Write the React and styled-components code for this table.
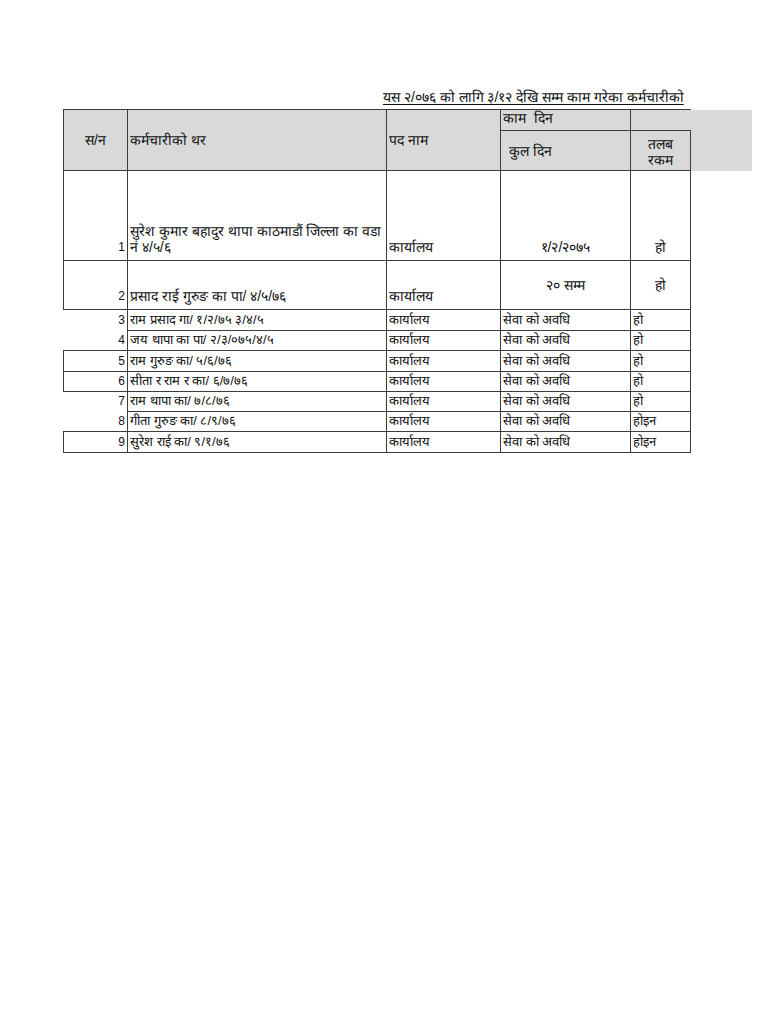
import styled, { createGlobalStyle } from 'styled-components'

const GlobalStyle = createGlobalStyle`
    html, body {
        margin: 0;
        padding: 0;
        background: #ffffff;
    }
    body {
        font-family: "Liberation Sans", "DejaVu Sans", sans-serif;
        color: #111111;
    }
`

const rows = [
    { no: 1, name: 'सुरेश कुमार बहादुर थापा काठमाडौं जिल्ला का वडा नं ४/५/६', post: 'कार्यालय', period: '१/२/२०७५', note: 'हो', size: 'tall', h: 89 },
    { no: 2, name: 'प्रसाद राई गुरुङ का पा/ ४/५/७६', post: 'कार्यालय', period: '२० सम्म', note: 'हो', size: 'mid', h: 48 },
    { no: 3, name: 'राम प्रसाद  गा/ १/२/७५ ३/४/५', post: 'कार्यालय', period: 'सेवा को अवधि', note: 'हो', open: 'top', h: 20 },
    { no: 4, name: 'जय थापा का पा/ २/३/०७५/४/५', post: 'कार्यालय', period: 'सेवा को अवधि', note: 'हो', open: 'bottom', h: 19 },
    { no: 5, name: 'राम गुरुङ का/ ५/६/७६', post: 'कार्यालय', period: 'सेवा को अवधि', note: 'हो', h: 20 },
    { no: 6, name: 'सीता र राम र का/ ६/७/७६', post: 'कार्यालय', period: 'सेवा को अवधि', note: 'हो', h: 19 },
    { no: 7, name: 'राम थापा का/ ७/८/७६', post: 'कार्यालय', period: 'सेवा को अवधि', note: 'हो', open: 'top', h: 19 },
    { no: 8, name: 'गीता गुरुङ का/ ८/९/७६', post: 'कार्यालय', period: 'सेवा को अवधि', note: 'होइन', open: 'bottom', h: 19 },
    { no: 9, name: 'सुरेश राई का/ ९/१/७६', post: 'कार्यालय', period: 'सेवा को अवधि', note: 'होइन', h: 20 },
]

const App = () => {
    return (
        <Page>
            <GlobalStyle />
            <Sheet>
                <Title>
                    <span>यस २/०७६ को लागि ३/१२ देखि सम्म काम गरेका कर्मचारीको</span>
                </Title>
                <Table>
                    <colgroup>
                        <col style={{ width: 64 }} />
                        <col style={{ width: 259 }} />
                        <col style={{ width: 114 }} />
                        <col style={{ width: 130 }} />
                        <col style={{ width: 60 }} />
                        <col style={{ width: 61 }} />
                    </colgroup>
                    <thead>
                        <tr>
                            <Head rowSpan={2}><Box h={60} middle center>स/न</Box></Head>
                            <Head rowSpan={2}><Box h={60} middle>कर्मचारीको थर</Box></Head>
                            <Head rowSpan={2}><Box h={60} middle>पद नाम</Box></Head>
                            <Head><Box h={20} top>काम&nbsp; दिन</Box></Head>
                            <Head noRight><Box h={20} /></Head>
                            <Filler rowSpan={2}></Filler>
                        </tr>
                        <tr>
                            <Head><Box h={39} middle indent>कुल दिन</Box></Head>
                            <Head><Box h={39} middle center><Stack>तलब रकम</Stack></Box></Head>
                        </tr>
                    </thead>
                    <tbody>
                        {rows.map(r => {
                            const big = !!r.size
                            const mid = r.size === 'mid'
                            return (
                                <tr key={r.no}>
                                    <NoCell open={r.open}>
                                        <Box h={r.h} right pad={big ? 5 : 2} small>{r.no}</Box>
                                    </NoCell>
                                    <Cell big={big}><Box h={r.h} pad={big ? 5 : 2}>{r.name}</Box></Cell>
                                    <Cell big={big}><Box h={r.h} pad={big ? 5 : 2}>{r.post}</Box></Cell>
                                    <Cell big={big}>
                                        <Box h={r.h} center={big} middle={mid} pad={big && !mid ? 5 : 2}>{r.period}</Box>
                                    </Cell>
                                    <Cell big={big}>
                                        <Box h={r.h} center={big} middle={mid} pad={big && !mid ? 5 : 2}>{r.note}</Box>
                                    </Cell>
                                    <Blank />
                                </tr>
                            )
                        })}
                    </tbody>
                </Table>
            </Sheet>
        </Page>
    )
}

export default App

const Page = styled.div`

    width: 768px;
    min-height: 1024px;
    padding: 88px 0 0 63px;
    box-sizing: border-box;

`
const Sheet = styled.div`

    display: flex;
    flex-direction: column;
    width: 688px;

`
const Title = styled.div`

    width: 627px;
    padding-left: 320px;
    box-sizing: border-box;
    overflow: hidden;
    white-space: nowrap;
    font-size: 14px;
    line-height: 18px;
    height: 21px;

    span {
        text-decoration: underline;
        text-underline-offset: 2px;
    }

`
const Table = styled.table`

    border-collapse: collapse;
    table-layout: fixed;
    width: 688px;
    font-size: 14px;

    td, th {
        padding: 0 2px;
        overflow: hidden;
    }

`
const Box = styled.div`

    box-sizing: border-box;
    height: ${props => props.h || 0}px;
    display: flex;
    align-items: ${props => props.middle ? 'center' : props.top ? 'flex-start' : 'flex-end'};
    justify-content: ${props => props.center ? 'center' : props.right ? 'flex-end' : 'flex-start'};
    text-align: ${props => props.center ? 'center' : 'left'};
    padding-bottom: ${props => props.middle || props.top ? 0 : (props.pad || 0)}px;
    padding-left: ${props => props.indent ? '6px' : '0'};
    font-size: ${props => props.small ? '12px' : 'inherit'};
    line-height: 16px;
    overflow: hidden;

`
const Stack = styled.span`

    display: block;
    width: 34px;
    padding-top: 2px;

`
const Head = styled.th`

    font-weight: normal;
    background: #d9d9d9;
    border: 1px solid #3c3c3c;
    border-right: ${props => props.noRight ? 'none' : '1px solid #3c3c3c'};
    vertical-align: top;

`
const Filler = styled.th`

    background: #d9d9d9;
    border: none;

`
const Cell = styled.td`

    border: 1px solid #3c3c3c;
    vertical-align: top;
    font-size: ${props => props.big ? '14px' : '13px'};
    white-space: ${props => props.big ? 'normal' : 'nowrap'};

`
const NoCell = styled.td`

    border: 1px solid #3c3c3c;
    border-left: ${props => props.open ? 'none' : '1px solid #3c3c3c'};
    border-top: ${props => props.open === 'bottom' ? 'none' : '1px solid #3c3c3c'};
    border-bottom: ${props => props.open === 'top' ? 'none' : '1px solid #3c3c3c'};
    vertical-align: top;

`
const Blank = styled.td`

    border: none;

`
